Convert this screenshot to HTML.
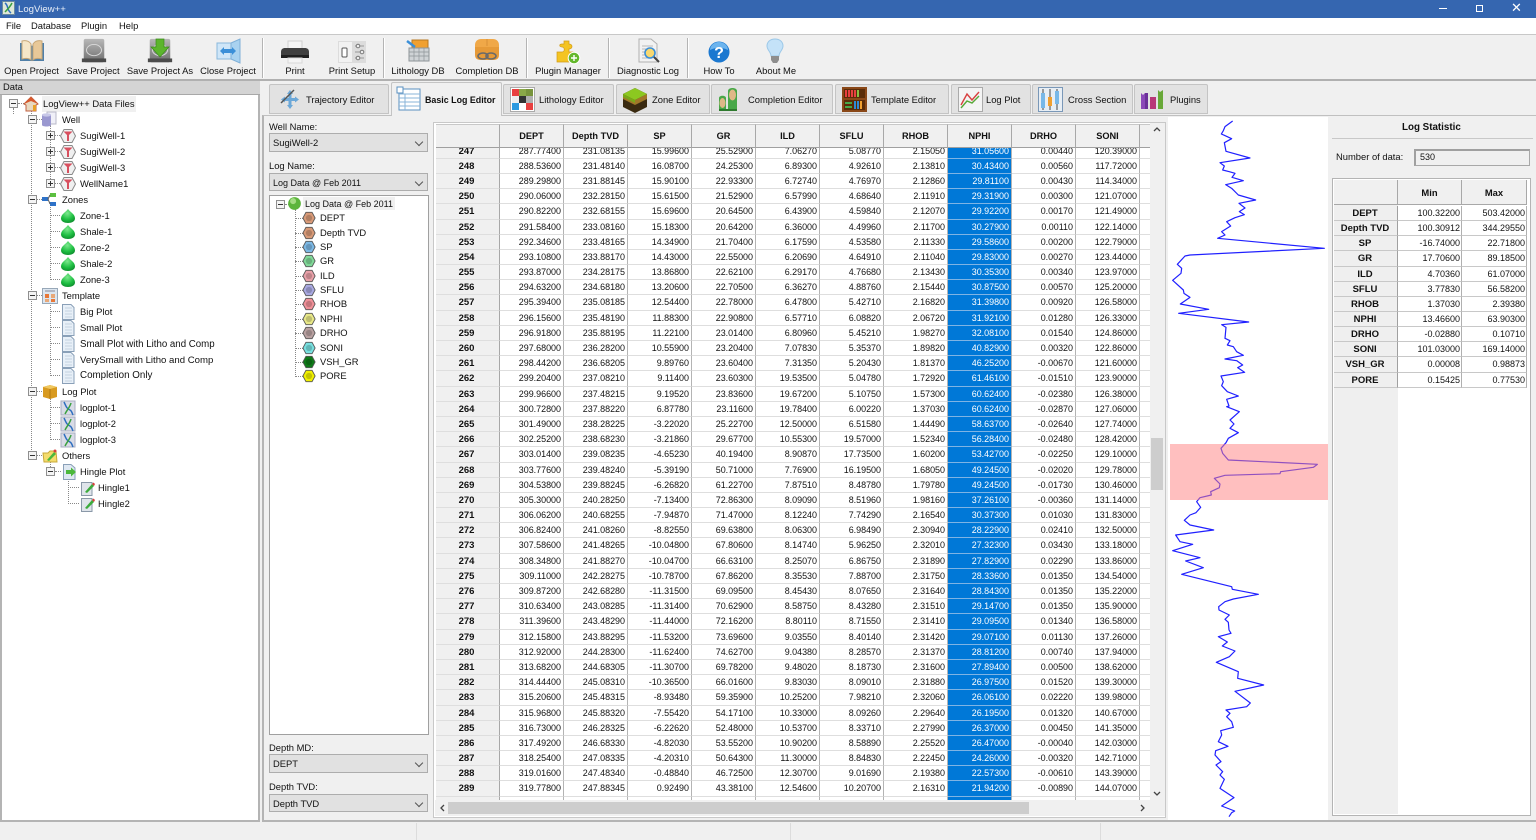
<!DOCTYPE html>
<html><head><meta charset="utf-8"><title>LogView++</title>
<style>
*{box-sizing:border-box}
html,body{margin:0;padding:0;width:1536px;height:840px;overflow:hidden;background:#f0f0f0;font:9.4px/12px "Liberation Sans",sans-serif;color:#111}
.a{position:absolute}
.t{position:absolute;white-space:nowrap;line-height:12px}
.tl{position:absolute;white-space:nowrap;line-height:12px;transform:translateX(-50%);top:65px}
.sep{position:absolute;top:38px;height:40px;width:1px;background:#b4b4b4;box-shadow:1px 0 0 #fff}
.tab{position:absolute;top:84px;height:30px;background:#e2e2e2;border:1px solid #c4c4c4;border-bottom:1px solid #c4c4c4;border-radius:2px 2px 0 0}
.tab span{position:absolute;top:9px;white-space:nowrap}
.tab svg{position:absolute;top:2px}
.cb{position:absolute;left:269px;width:159px;background:#e1e1e1;border:1px solid #adadad;padding-left:3px;line-height:18px}
.cb:after{content:"";position:absolute;right:5px;top:5px;width:5px;height:5px;border-right:1px solid #555;border-bottom:1px solid #555;transform:rotate(45deg)}
.ex{position:absolute;width:9px;height:9px;border:1px solid #8f8f8f;background:#f4f4f4}
.ex:before{content:"";position:absolute;left:1px;top:3px;width:5px;height:1px;background:#333}
.ex.p:after{content:"";position:absolute;left:3px;top:1px;width:1px;height:5px;background:#333}
.v{position:absolute;border-left:1px dotted #888;width:0}
.h{position:absolute;border-top:1px dotted #888;height:0}
.ic{position:absolute;width:16px;height:16px}
.hd{position:absolute;top:124px;height:24px;background:#f0f0f0;border-right:1px solid #a8a8a8;border-bottom:1px solid #a0a0a0;border-top:1px solid #c8c8c8;font-weight:bold;text-align:center;line-height:22px;font-size:9.2px}
.g{position:absolute;left:0;top:-4.4px;display:grid;grid-template-columns:64px repeat(10,64px) 10px;grid-auto-rows:15.19px;width:714px;font-size:8.95px;line-height:15px}
.g b,.g i,.g em,.g u{display:block;font-style:normal;text-decoration:none;border-bottom:1px solid #dedede;border-right:1px solid #b4b4b4;text-align:right;padding-right:2px;overflow:hidden}
.g b{background:#f0f0f0;text-align:center;font-size:9.5px;line-height:15.500px;border-right-color:#a8a8a8}
.g em{background:#0078d7;color:#fff;border-bottom-color:#7fb4e4;border-right-color:#b4b4b4}
.g u{border-right:0}
.s{position:absolute;left:1334px;top:206px;width:193px;display:grid;grid-template-columns:64px 64px 65px;grid-auto-rows:15.15px;font-size:9px;line-height:15px}
.s b,.s i{display:block;font-style:normal;border-bottom:1px solid #c8c8c8;border-right:1px solid #b0b0b0;text-align:right;padding-right:1px}
.s b{background:#efefef;text-align:center;font-size:9.5px;line-height:15px;border-right-color:#a0a0a0}
</style></head><body>
<svg width="0" height="0" style="position:absolute"><defs>
<radialGradient id="gz" cx=".45" cy=".3" r=".75"><stop offset="0" stop-color="#7ee88e"/><stop offset=".6" stop-color="#1fc043"/><stop offset="1" stop-color="#0e8a2c"/></radialGradient>
<linearGradient id="gd" x1="0" y1="0" x2="0" y2="1"><stop offset="0" stop-color="#b8b8b8"/><stop offset="1" stop-color="#6d6d6d"/></linearGradient>
<symbol id="drop" viewBox="0 0 16 16"><path d="M8 1C10 4 15 6 15 10.500C15 13.500 11.500 15 8 15C4.500 15 1 13.500 1 10.500C1 6 6 4 8 1Z" fill="url(#gz)"/></symbol>
<symbol id="well" viewBox="0 0 16 16"><path d="M4 1.5H12L15.5 8L12 14.5H4L.5 8Z" fill="#f0f0f0" stroke="#8a8a8a"/><path d="M3.5 3.5H12.5L9 7V13H7V7Z" fill="#d8505f"/></symbol>
<symbol id="doc" viewBox="0 0 16 16"><path d="M2.5 .5H11L14 3.5V15.5H2.5Z" fill="#e8f0f8" stroke="#8aa0b8"/><path d="M5 4H12M5 7H12M5 10H12M5 13H12" stroke="#c4d2e0"/></symbol>
<symbol id="lp" viewBox="0 0 16 16"><rect x="1" y="1" width="14" height="14" fill="#d9dbe6" stroke="#a8acc0"/><path d="M4 2C6 6 6 8 10 10C12 11 12 13 13 15" fill="none" stroke="#2e6fc0" stroke-width="1.5"/><path d="M11 3C10 7 7 10 5 14" fill="none" stroke="#3aa040" stroke-width="1.5"/></symbol>
<symbol id="pen" viewBox="0 0 16 16"><path d="M1.5 2.5H12V15.5H1.5Z" fill="#dfe4ea" stroke="#8a98a8"/><path d="M5 12L12 4L14 6L7 13Z" fill="#3cab3c"/><path d="M12 4L13.5 2.5L15 4L14 6Z" fill="#d8403c"/></symbol>
<symbol id="hx" viewBox="0 0 16 16"><path d="M4.5 1.5H11.5L15 8L11.5 14.5H4.5L1 8Z" fill="currentColor" stroke="#555"/><circle cx="8" cy="8" r="3.6" fill="#000" opacity=".18"/></symbol>
<symbol id="ball" viewBox="0 0 16 16"><circle cx="8" cy="8" r="6.8" fill="#5cb53c"/><circle cx="6.5" cy="5.5" r="3.2" fill="#a4dc84"/></symbol>
<symbol id="hdd" viewBox="0 0 30 30"><rect x="4" y="2" width="22" height="25" rx="2" fill="url(#gd)"/><rect x="2" y="23" width="26" height="4" fill="#4b4b4b"/><ellipse cx="15" cy="14" rx="8" ry="6" fill="none" stroke="#dadada"/></symbol>
</defs></svg>

<!-- title bar -->
<div class="a" style="left:0;top:0;width:1536px;height:18px;background:#3566b0"></div>
<svg class="a" style="left:2px;top:1px" width="13" height="14" viewBox="0 0 13 14"><rect x=".5" y=".5" width="12" height="13" fill="#dfe8d8" stroke="#6a8aa0"/><path d="M3 2C7 5 4 8 9 12" stroke="#2f6fc0" stroke-width="1.5" fill="none"/><path d="M10 2C8 6 6 8 3 11" stroke="#3aa040" stroke-width="1.5" fill="none"/></svg>
<div class="t" style="left:18px;top:4px;color:#e8eef8;font-size:9.6px">LogView++</div>
<div class="a" style="left:1439px;top:8px;width:8px;height:1px;background:#fff"></div>
<div class="a" style="left:1476px;top:5px;width:7px;height:7px;border:1px solid #fff"></div>
<div class="t" style="left:1511px;top:2px;color:#fff;font-size:13px">✕</div>

<!-- menu -->
<div class="a" style="left:0;top:18px;width:1536px;height:17px;background:#fff;border-bottom:1px solid #c8c8c8"></div>
<div class="t" style="left:6px;top:20px">File</div>
<div class="t" style="left:31px;top:20px">Database</div>
<div class="t" style="left:81px;top:20px">Plugin</div>
<div class="t" style="left:119px;top:20px">Help</div>

<!-- toolbar -->
<div class="a" style="left:0;top:79px;width:1536px;height:2px;background:#b0b0b0"></div>
<svg class="a" style="left:18px;top:38px" width="28" height="26" viewBox="0 0 28 26"><path d="M2 5H12L14 8L16 5H26V23H2Z" fill="#4f7fa8"/><path d="M4 3C8 2 11 3 13 6V22C11 20 8 20 4 21Z" fill="#f5e6c8" stroke="#c8a878"/><path d="M24 3C20 2 17 3 15 6V22C17 20 20 20 24 21Z" fill="#e8c898" stroke="#c8a878"/></svg>
<svg class="a" style="left:79px;top:37px" width="30" height="28"><use href="#hdd"/></svg>
<svg class="a" style="left:145px;top:37px" width="30" height="28"><use href="#hdd"/><path d="M11 2H19V10H24L15 20L6 10H11Z" fill="#5cb52c" stroke="#3a8a1c" stroke-width=".7"/></svg>
<svg class="a" style="left:215px;top:37px" width="27" height="27" viewBox="0 0 27 27"><path d="M2 6H18V22H2Z" fill="#cfe6f8" stroke="#8ab8dc"/><path d="M16 6L25 2V26L16 22Z" fill="#a9d2f0" stroke="#7fb0d8"/><path d="M5 14L9 10V12H17V10L21 14L17 18V16H9V18Z" fill="#3b8fd8"/></svg>
<svg class="a" style="left:280px;top:40px" width="30" height="24" viewBox="0 0 30 24"><rect x="8" y="1" width="14" height="9" fill="#f4f4f4" stroke="#d0d0d0"/><path d="M1 12C1 9 3 8 5 8H25C27 8 29 9 29 12V18H1Z" fill="#3f3f3f"/><rect x="1" y="15" width="28" height="3" fill="#1f1f1f"/><rect x="8" y="18" width="14" height="5" fill="#f4f4f4" stroke="#d8d8d8"/></svg>
<svg class="a" style="left:338px;top:41px" width="28" height="22" viewBox="0 0 28 22"><rect x="0" y="0" width="28" height="22" fill="#dcdcdc"/><rect x="1" y="1" width="13" height="20" fill="#f2f2f2"/><rect x="4" y="7" width="5" height="9" rx="1" fill="#fff" stroke="#555"/><path d="M17 5H26M17 11H26M17 17H26" stroke="#999"/><circle cx="20" cy="5" r="1.8" fill="#eee" stroke="#777"/><circle cx="24" cy="11" r="1.8" fill="#eee" stroke="#777"/><circle cx="20" cy="17" r="1.8" fill="#eee" stroke="#777"/></svg>
<svg class="a" style="left:405px;top:38px" width="27" height="27" viewBox="0 0 27 27"><rect x="7" y="2" width="16" height="8" fill="#f0a030" stroke="#b87820"/><rect x="4" y="10" width="20" height="13" fill="#cfd3d6" stroke="#8e9498"/><path d="M4 14H24M9 10V23M14 10V23M19 10V23M4 18H24" stroke="#8e9498" stroke-width=".7"/><path d="M2 3L10 9" stroke="#3b8fd8" stroke-width="2.5"/></svg>
<svg class="a" style="left:474px;top:38px" width="26" height="26" viewBox="0 0 26 26"><path d="M1 7C1 3 4 1 7 1H19C22 1 25 3 25 7V14H1Z" fill="#f0a848"/><path d="M1 9H25V17C25 21 22 22 19 22H7C4 22 1 21 1 17Z" fill="#e69a38"/><path d="M13 1V8" stroke="#d89038"/><ellipse cx="9" cy="18" rx="5" ry="3" fill="none" stroke="#6a6a6a" stroke-width="1.6"/><ellipse cx="17" cy="18" rx="5" ry="3" fill="none" stroke="#6a6a6a" stroke-width="1.6"/></svg>
<svg class="a" style="left:554px;top:38px" width="27" height="27" viewBox="0 0 27 27"><path d="M10 3H15V6C19 6 19 11 15 11V14H19V24H3V14H8C11 14 11 9 8 9C5 9 5 6 8 6H10Z" fill="#f4c422" stroke="#d09a18" stroke-width=".7"/><circle cx="20" cy="20" r="5.8" fill="#64b82c" stroke="#fff"/><path d="M20 17V23M17 20H23" stroke="#fff" stroke-width="1.4"/></svg>
<svg class="a" style="left:636px;top:38px" width="26" height="27" viewBox="0 0 26 27"><path d="M3 1H15L21 6V24H3Z" fill="#f2f2f2" stroke="#b0b0b0"/><path d="M6 8H17M6 11H17M6 14H9M6 17H9M6 20H12" stroke="#b8b8b8"/><circle cx="14" cy="15" r="5" fill="#f8d870" stroke="#3b8fd8" stroke-width="1.6"/><path d="M18 19L23 24" stroke="#444" stroke-width="2"/></svg>
<svg class="a" style="left:708px;top:41px" width="22" height="22" viewBox="0 0 22 22"><circle cx="11" cy="11" r="10.5" fill="#1b78d0"/><path d="M2 9A9 8 0 0 1 20 9C14 6 8 6 2 9Z" fill="#6cb4ee"/><text x="11" y="17" text-anchor="middle" font-family="Liberation Sans" font-weight="bold" font-size="16" fill="#fff">?</text></svg>
<svg class="a" style="left:766px;top:38px" width="18" height="26" viewBox="0 0 18 26"><path d="M9 1C4 1 1 4 1 8C1 12 5 14 5 18H13C13 14 17 12 17 8C17 4 14 1 9 1Z" fill="#c4e2f8" stroke="#9cc8e8"/><path d="M5 18H13V22L11 25H7L5 22Z" fill="#8e8e8e"/></svg>
<div class="tl" style="left:31.500px">Open Project</div>
<div class="tl" style="left:93px">Save Project</div>
<div class="tl" style="left:160px">Save Project As</div>
<div class="tl" style="left:228px">Close Project</div>
<div class="tl" style="left:295px">Print</div>
<div class="tl" style="left:352px">Print Setup</div>
<div class="tl" style="left:418px">Lithology DB</div>
<div class="tl" style="left:487px">Completion DB</div>
<div class="tl" style="left:568px">Plugin Manager</div>
<div class="tl" style="left:648px">Diagnostic Log</div>
<div class="tl" style="left:719px">How To</div>
<div class="tl" style="left:776px">About Me</div>
<div class="sep" style="left:262px"></div><div class="sep" style="left:383px"></div><div class="sep" style="left:526px"></div><div class="sep" style="left:608px"></div><div class="sep" style="left:687px"></div>

<!-- left panel -->
<div class="a" style="left:0;top:81px;width:260px;height:741px;border:2px solid #b4b4b4;border-top:0;background:#fff"></div>
<div class="a" style="left:0;top:81px;width:260px;height:14px;background:#d4d4d4;border-bottom:1px solid #a8a8a8"></div>
<div class="t" style="left:3px;top:81px">Data</div>
<div class="a" style="left:42px;top:96px;width:94px;height:16px;background:#f0f0f0"></div>

<div class="v" style="left:31px;top:110px;height:346px"></div>
<div class="v" style="left:13px;top:108px;height:6px"></div>
<div class="v" style="left:50px;top:125px;height:60px"></div>
<div class="v" style="left:50px;top:205px;height:75px"></div>
<div class="v" style="left:50px;top:301px;height:75px"></div>
<div class="v" style="left:50px;top:397px;height:43px"></div>
<div class="v" style="left:50px;top:461px;height:10px"></div>
<div class="v" style="left:68px;top:477px;height:27px"></div>
<div class="h" style="left:18px;top:103px;width:8px"></div>
<div class="h" style="left:36px;top:119px;width:8px"></div><div class="h" style="left:36px;top:199px;width:8px"></div><div class="h" style="left:36px;top:295px;width:8px"></div><div class="h" style="left:36px;top:391px;width:8px"></div><div class="h" style="left:36px;top:455px;width:8px"></div>
<div class="h" style="left:54px;top:135px;width:6px"></div><div class="h" style="left:54px;top:151px;width:6px"></div><div class="h" style="left:54px;top:167px;width:6px"></div><div class="h" style="left:54px;top:183px;width:6px"></div>
<div class="h" style="left:50px;top:215px;width:10px"></div><div class="h" style="left:50px;top:231px;width:10px"></div><div class="h" style="left:50px;top:247px;width:10px"></div><div class="h" style="left:50px;top:263px;width:10px"></div><div class="h" style="left:50px;top:279px;width:10px"></div>
<div class="h" style="left:50px;top:311px;width:10px"></div><div class="h" style="left:50px;top:327px;width:10px"></div><div class="h" style="left:50px;top:343px;width:10px"></div><div class="h" style="left:50px;top:359px;width:10px"></div><div class="h" style="left:50px;top:375px;width:10px"></div>
<div class="h" style="left:50px;top:407px;width:10px"></div><div class="h" style="left:50px;top:423px;width:10px"></div><div class="h" style="left:50px;top:439px;width:10px"></div>
<div class="h" style="left:55px;top:471px;width:6px"></div><div class="h" style="left:68px;top:487px;width:11px"></div><div class="h" style="left:68px;top:503px;width:11px"></div>

<div class="ex" style="left:9px;top:99px"></div><div class="ex" style="left:28px;top:115px"></div><div class="ex" style="left:28px;top:195px"></div><div class="ex" style="left:28px;top:291px"></div><div class="ex" style="left:28px;top:387px"></div><div class="ex" style="left:28px;top:451px"></div>
<div class="ex p" style="left:46px;top:131px"></div><div class="ex p" style="left:46px;top:147px"></div><div class="ex p" style="left:46px;top:163px"></div><div class="ex p" style="left:46px;top:179px"></div><div class="ex" style="left:46px;top:467px"></div>

<svg class="ic" style="left:23px;top:96px" viewBox="0 0 16 16"><path d="M1 8L8 1L15 8L13 9V15H3V9Z" fill="#e8d8c0" stroke="#c06040"/><path d="M1 8L8 1L15 8L8 5Z" fill="#d8582c"/><rect x="10" y="9" width="3" height="6" fill="#e8a028"/></svg>
<svg class="ic" style="left:41px;top:111px" viewBox="0 0 16 16"><rect x="6" y="1" width="9" height="12" fill="#f0f0f8" stroke="#b8b8c8"/><path d="M1 4C1 2 10 2 10 4V14C10 16 1 16 1 14Z" fill="#9a98d0"/><ellipse cx="5.5" cy="4" rx="4.5" ry="1.6" fill="#c8c8e8"/></svg>
<svg class="ic" style="left:60px;top:128px"><use href="#well"/></svg><svg class="ic" style="left:60px;top:144px"><use href="#well"/></svg><svg class="ic" style="left:60px;top:160px"><use href="#well"/></svg><svg class="ic" style="left:60px;top:176px"><use href="#well"/></svg>
<svg class="ic" style="left:41px;top:192px" viewBox="0 0 16 16"><rect x="1" y="5" width="6" height="4" fill="#2e72c8"/><rect x="9" y="1" width="6" height="4" fill="#5cc040"/><rect x="9" y="10" width="6" height="4" fill="#2e72c8"/><path d="M7 7L9 3M7 7L9 12" stroke="#555"/></svg>
<svg class="ic" style="left:60px;top:208px"><use href="#drop"/></svg><svg class="ic" style="left:60px;top:224px"><use href="#drop"/></svg><svg class="ic" style="left:60px;top:240px"><use href="#drop"/></svg><svg class="ic" style="left:60px;top:256px"><use href="#drop"/></svg><svg class="ic" style="left:60px;top:272px"><use href="#drop"/></svg>
<svg class="ic" style="left:42px;top:288px" viewBox="0 0 16 16"><rect x=".5" y=".5" width="15" height="15" fill="#dce6f0" stroke="#98a8b8"/><rect x="3" y="6" width="4" height="4" fill="#e87838"/><rect x="9" y="6" width="4" height="4" fill="#e8a878"/><rect x="3" y="11" width="4" height="3" fill="#e8a878"/><rect x="9" y="11" width="4" height="3" fill="#e87838"/><path d="M3 3H13" stroke="#889"/></svg>
<svg class="ic" style="left:60px;top:304px"><use href="#doc"/></svg><svg class="ic" style="left:60px;top:320px"><use href="#doc"/></svg><svg class="ic" style="left:60px;top:336px"><use href="#doc"/></svg><svg class="ic" style="left:60px;top:352px"><use href="#doc"/></svg><svg class="ic" style="left:60px;top:368px"><use href="#doc"/></svg>
<svg class="ic" style="left:42px;top:384px" viewBox="0 0 16 16"><path d="M8 1L15 3V13L8 15L1 13V3Z" fill="#d89a20"/><path d="M1 3L8 5L15 3L8 1Z" fill="#f0c860"/><path d="M8 5V15" stroke="#b07810"/></svg>
<svg class="ic" style="left:60px;top:400px"><use href="#lp"/></svg><svg class="ic" style="left:60px;top:416px"><use href="#lp"/></svg><svg class="ic" style="left:60px;top:432px"><use href="#lp"/></svg>
<svg class="ic" style="left:42px;top:448px" viewBox="0 0 16 16"><path d="M1 5H6L8 3H14L15 14H2Z" fill="#f4dc6c" stroke="#c8a838"/><path d="M5 12L12 4L14 6L7 13Z" fill="#4cb83c"/><circle cx="13" cy="3" r="1.5" fill="#d8403c"/></svg>
<svg class="ic" style="left:61px;top:464px" viewBox="0 0 16 16"><path d="M2.5 .5H10L14 4V15.5H2.5Z" fill="#dfe8f2" stroke="#8aa0b8"/><path d="M5 6H10V3.5L15 8L10 12.5V10H5Z" fill="#4cb83c"/></svg>
<svg class="ic" style="left:80px;top:480px"><use href="#pen"/></svg><svg class="ic" style="left:80px;top:496px"><use href="#pen"/></svg>

<div class="t" style="left:43px;top:98px">LogView++ Data Files</div>
<div class="t" style="left:62px;top:114px">Well</div>
<div class="t" style="left:80px;top:130px">SugiWell-1</div>
<div class="t" style="left:80px;top:146px">SugiWell-2</div>
<div class="t" style="left:80px;top:162px">SugiWell-3</div>
<div class="t" style="left:80px;top:178px">WellName1</div>
<div class="t" style="left:62px;top:194px">Zones</div>
<div class="t" style="left:80px;top:210px">Zone-1</div>
<div class="t" style="left:80px;top:226px">Shale-1</div>
<div class="t" style="left:80px;top:242px">Zone-2</div>
<div class="t" style="left:80px;top:258px">Shale-2</div>
<div class="t" style="left:80px;top:274px">Zone-3</div>
<div class="t" style="left:62px;top:290px">Template</div>
<div class="t" style="left:80px;top:306px">Big Plot</div>
<div class="t" style="left:80px;top:322px">Small Plot</div>
<div class="t" style="left:80px;top:338.500px;font-size:9.7px">Small Plot with Litho and Comp</div>
<div class="t" style="left:80px;top:354.500px;font-size:9.6px">VerySmall with Litho and Comp</div>
<div class="t" style="left:80px;top:370px;font-size:9.8px">Completion Only</div>
<div class="t" style="left:62px;top:386px">Log Plot</div>
<div class="t" style="left:80px;top:402px">logplot-1</div>
<div class="t" style="left:80px;top:418px">logplot-2</div>
<div class="t" style="left:80px;top:434px">logplot-3</div>
<div class="t" style="left:62px;top:450px">Others</div>
<div class="t" style="left:80px;top:466px">Hingle Plot</div>
<div class="t" style="left:98px;top:482px">Hingle1</div>
<div class="t" style="left:98px;top:498px">Hingle2</div>

<!-- right main frame -->
<div class="a" style="left:262px;top:115px;width:1274px;height:707px;border:2px solid #b4b4b4;border-right:0;border-top:1px solid #c0c0c0;background:#f0f0f0"></div>

<!-- tabs -->
<div class="tab" style="left:269px;width:120px"><svg style="left:8px" width="24" height="24" viewBox="0 0 24 24"><path d="M12 3L15 7H13.5V11H17V9.5L21 12.500L17 15.500V14H13.500V18H15L12 22L9 18H10.500V14H7V15.500L3 12.500L7 9.500V11H10.500V7H9Z" fill="#6ca8d8"/><path d="M3 16L16 3" stroke="#555" stroke-width="1.500"/></svg><span style="left:36px">Trajectory Editor</span></div>
<div class="tab" style="left:391px;width:111px;top:82px;height:34px;background:#f0f0f0;z-index:2;border-bottom:0"><svg style="left:4px;top:3px" width="26" height="26" viewBox="0 0 26 26"><rect x="3" y="3" width="21" height="21" fill="#fff" stroke="#5a90c0"/><path d="M3 8H24M3 12H24M3 16H24M3 20H24M9 8V24" stroke="#8ab4d8"/><rect x="1" y="1" width="6" height="6" fill="#fff" stroke="#5a90c0"/></svg><span style="left:33px;top:11px;font-weight:bold;font-size:8.9px">Basic Log Editor</span></div>
<div class="tab" style="left:503px;width:111px"><svg style="left:6px" width="25" height="25" viewBox="0 0 25 25"><rect x=".5" y=".5" width="24" height="24" fill="#fff" stroke="#aaa"/><rect x="2" y="2" width="7" height="7" fill="#e84040"/><rect x="9" y="2" width="7" height="7" fill="#8aa848"/><rect x="16" y="2" width="7" height="7" fill="#78943c"/><rect x="9" y="9" width="7" height="7" fill="#333"/><rect x="16" y="9" width="7" height="7" fill="#b0b0b0"/><rect x="2" y="16" width="7" height="7" fill="#2e9ae0"/><rect x="16" y="16" width="7" height="7" fill="#e84040"/><rect x="2" y="9" width="7" height="7" fill="#eee"/></svg><span style="left:35px">Lithology Editor</span></div>
<div class="tab" style="left:616px;width:94px"><svg style="left:5px" width="26" height="26" viewBox="0 0 26 26"><path d="M13 1L25 7V20L13 26L1 20V7Z" fill="#3a2a10"/><path d="M1 7L13 13L25 7V12L13 18L1 12Z" fill="#a07828"/><path d="M13 1L25 7L13 13L1 7Z" fill="#8cc820"/><path d="M1 7L13 13V16L1 10Z" fill="#78a818"/></svg><span style="left:35px">Zone Editor</span></div>
<div class="tab" style="left:711px;width:122px"><svg style="left:6px" width="26" height="26" viewBox="0 0 26 26"><path d="M1 11C1 8 8 8 8 11V24H1Z" fill="#48a848"/><path d="M10 4C10 0 19 0 19 4V24H10Z" fill="#48a848"/><ellipse cx="4.500" cy="16" rx="3" ry="5" fill="#e0b888"/><ellipse cx="14.500" cy="8" rx="3.500" ry="5.500" fill="#e0b888"/><rect x="1" y="22" width="18" height="2" fill="#2e7a2e"/></svg><span style="left:36px">Completion Editor</span></div>
<div class="tab" style="left:835px;width:114px"><svg style="left:6px" width="25" height="25" viewBox="0 0 25 25"><rect width="25" height="25" fill="#8a4818"/><rect x="2" y="2" width="21" height="9" fill="#5a2c08"/><path d="M4 3V10M7 3V10M10 3V10M13 3V10" stroke="#e84040" stroke-width="2"/><path d="M16 3V10" stroke="#88c040" stroke-width="2"/><rect x="2" y="13" width="21" height="10" fill="#5a2c08"/><path d="M13 14V22M16 14V22" stroke="#2e8ad8" stroke-width="2"/><path d="M19 14V22" stroke="#f0a030" stroke-width="2"/><path d="M3 16H10M3 20H10" stroke="#48a848" stroke-width="2"/></svg><span style="left:35px">Template Editor</span></div>
<div class="tab" style="left:951px;width:80px"><svg style="left:6px" width="25" height="25" viewBox="0 0 25 25"><rect x=".5" y=".5" width="24" height="24" fill="#f4f4f4" stroke="#aaa"/><path d="M3 18L9 7L14 13L21 5" fill="none" stroke="#d84040" stroke-width="1.400"/><path d="M3 21L9 14L14 16L21 9" fill="none" stroke="#58a838" stroke-width="1.400"/></svg><span style="left:34px">Log Plot</span></div>
<div class="tab" style="left:1032px;width:101px"><svg style="left:5px" width="25" height="25" viewBox="0 0 25 25"><rect x=".5" y=".5" width="24" height="24" fill="#e8eef4" stroke="#7a98b8"/><path d="M5 2V23M12 2V23M19 2V23" stroke="#444"/><rect x="3" y="6" width="4" height="15" fill="#78b8e8"/><rect x="10" y="10" width="4" height="9" fill="#f0a030"/><rect x="17" y="4" width="4" height="13" fill="#78b8e8"/></svg><span style="left:35px">Cross Section</span></div>
<div class="tab" style="left:1134px;width:74px"><svg style="left:5px" width="26" height="25" viewBox="0 0 26 25"><path d="M1 6L3 8L5 6V22H1Z" fill="#8a48b8"/><path d="M5 6H8V22H5Z" fill="#6a3098"/><path d="M10 10H16V22H10Z" fill="#b83878"/><path d="M18 3L20 5L23 3V22H18Z" fill="#68a838"/></svg><span style="left:35px">Plugins</span></div>

<!-- editor left -->
<div class="t" style="left:269px;top:121px">Well Name:</div>
<div class="cb" style="top:133px;height:19px">SugiWell-2</div>
<div class="t" style="left:269px;top:160px">Log Name:</div>
<div class="cb" style="top:173px;height:18px;font-size:9px">Log Data @ Feb 2011</div>
<div class="a" style="left:269px;top:195px;width:160px;height:540px;background:#fff;border:1px solid #a0a0a0"></div>
<div class="a" style="left:303px;top:197px;width:92px;height:13px;background:#f0f0f0"></div>
<div class="v" style="left:295px;top:209px;height:168px"></div>
<div class="ex" style="left:276px;top:200px"></div>
<div class="h" style="left:285px;top:204px;width:4px"></div>
<svg class="ic" style="left:287px;top:196px;width:15px;height:15px"><use href="#ball"/></svg>
<div class="h" style="left:295px;top:218px;width:8px"></div><div class="h" style="left:295px;top:233px;width:8px"></div><div class="h" style="left:295px;top:247px;width:8px"></div><div class="h" style="left:295px;top:261px;width:8px"></div><div class="h" style="left:295px;top:276px;width:8px"></div><div class="h" style="left:295px;top:290px;width:8px"></div><div class="h" style="left:295px;top:304px;width:8px"></div><div class="h" style="left:295px;top:319px;width:8px"></div><div class="h" style="left:295px;top:333px;width:8px"></div><div class="h" style="left:295px;top:348px;width:8px"></div><div class="h" style="left:295px;top:362px;width:8px"></div><div class="h" style="left:295px;top:376px;width:8px"></div>
<svg class="ic" style="left:302px;top:211px;width:14px;height:14px;color:#d89a78"><use href="#hx"/></svg>
<svg class="ic" style="left:302px;top:226px;width:14px;height:14px;color:#d89a78"><use href="#hx"/></svg>
<svg class="ic" style="left:302px;top:240px;width:14px;height:14px;color:#7cb8e4"><use href="#hx"/></svg>
<svg class="ic" style="left:302px;top:254px;width:14px;height:14px;color:#80d898"><use href="#hx"/></svg>
<svg class="ic" style="left:302px;top:269px;width:14px;height:14px;color:#e8a0a8"><use href="#hx"/></svg>
<svg class="ic" style="left:302px;top:283px;width:14px;height:14px;color:#a8a8e0"><use href="#hx"/></svg>
<svg class="ic" style="left:302px;top:297px;width:14px;height:14px;color:#f09098"><use href="#hx"/></svg>
<svg class="ic" style="left:302px;top:312px;width:14px;height:14px;color:#e8e888"><use href="#hx"/></svg>
<svg class="ic" style="left:302px;top:326px;width:14px;height:14px;color:#b8a0a0"><use href="#hx"/></svg>
<svg class="ic" style="left:302px;top:341px;width:14px;height:14px;color:#78e0e0"><use href="#hx"/></svg>
<svg class="ic" style="left:302px;top:355px;width:14px;height:14px;color:#0e7a18"><use href="#hx"/></svg>
<svg class="ic" style="left:302px;top:369px;width:14px;height:14px;color:#f0f000"><use href="#hx"/></svg>
<div class="t" style="left:305px;top:198px;font-size:9px">Log Data @ Feb 2011</div>
<div class="t" style="left:320px;top:212px">DEPT</div>
<div class="t" style="left:320px;top:227px">Depth TVD</div>
<div class="t" style="left:320px;top:241px">SP</div>
<div class="t" style="left:320px;top:255px">GR</div>
<div class="t" style="left:320px;top:270px">ILD</div>
<div class="t" style="left:320px;top:284px">SFLU</div>
<div class="t" style="left:320px;top:298px">RHOB</div>
<div class="t" style="left:320px;top:313px">NPHI</div>
<div class="t" style="left:320px;top:327px">DRHO</div>
<div class="t" style="left:320px;top:342px">SONI</div>
<div class="t" style="left:320px;top:356px">VSH_GR</div>
<div class="t" style="left:320px;top:370px">PORE</div>
<div class="t" style="left:269px;top:742px">Depth MD:</div>
<div class="cb" style="top:754px;height:19px">DEPT</div>
<div class="t" style="left:269px;top:781px">Depth TVD:</div>
<div class="cb" style="top:794px;height:18px">Depth TVD</div>

<!-- data table -->
<div class="a" style="left:433px;top:122px;width:733px;height:696px;background:#fff;border:1px solid #c8c8c8"></div>
<div class="hd" style="left:436px;width:64px"></div>
<div class="hd" style="left:500px;width:64px">DEPT</div>
<div class="hd" style="left:564px;width:64px">Depth TVD</div>
<div class="hd" style="left:628px;width:64px">SP</div>
<div class="hd" style="left:692px;width:64px">GR</div>
<div class="hd" style="left:756px;width:64px">ILD</div>
<div class="hd" style="left:820px;width:64px">SFLU</div>
<div class="hd" style="left:884px;width:64px">RHOB</div>
<div class="hd" style="left:948px;width:64px">NPHI</div>
<div class="hd" style="left:1012px;width:64px">DRHO</div>
<div class="hd" style="left:1076px;width:64px">SONI</div>
<div class="hd" style="left:1140px;width:10px;border-right:0"></div>
<div class="a" style="left:436px;top:148px;width:714px;height:652px;overflow:hidden">
<div class="g">
<b>247</b><i>287.77400</i><i>231.08135</i><i>15.99600</i><i>25.52900</i><i>7.06270</i><i>5.08770</i><i>2.15050</i><em>31.05600</em><i>0.00440</i><i>120.39000</i><u></u>
<b>248</b><i>288.53600</i><i>231.48140</i><i>16.08700</i><i>24.25300</i><i>6.89300</i><i>4.92610</i><i>2.13810</i><em>30.43400</em><i>0.00560</i><i>117.72000</i><u></u>
<b>249</b><i>289.29800</i><i>231.88145</i><i>15.90100</i><i>22.93300</i><i>6.72740</i><i>4.76970</i><i>2.12860</i><em>29.81100</em><i>0.00430</i><i>114.34000</i><u></u>
<b>250</b><i>290.06000</i><i>232.28150</i><i>15.61500</i><i>21.52900</i><i>6.57990</i><i>4.68640</i><i>2.11910</i><em>29.31900</em><i>0.00300</i><i>121.07000</i><u></u>
<b>251</b><i>290.82200</i><i>232.68155</i><i>15.69600</i><i>20.64500</i><i>6.43900</i><i>4.59840</i><i>2.12070</i><em>29.92200</em><i>0.00170</i><i>121.49000</i><u></u>
<b>252</b><i>291.58400</i><i>233.08160</i><i>15.18300</i><i>20.64200</i><i>6.36000</i><i>4.49960</i><i>2.11700</i><em>30.27900</em><i>0.00110</i><i>122.14000</i><u></u>
<b>253</b><i>292.34600</i><i>233.48165</i><i>14.34900</i><i>21.70400</i><i>6.17590</i><i>4.53580</i><i>2.11330</i><em>29.58600</em><i>0.00200</i><i>122.79000</i><u></u>
<b>254</b><i>293.10800</i><i>233.88170</i><i>14.43000</i><i>22.55000</i><i>6.20690</i><i>4.64910</i><i>2.11040</i><em>29.83000</em><i>0.00270</i><i>123.44000</i><u></u>
<b>255</b><i>293.87000</i><i>234.28175</i><i>13.86800</i><i>22.62100</i><i>6.29170</i><i>4.76680</i><i>2.13430</i><em>30.35300</em><i>0.00340</i><i>123.97000</i><u></u>
<b>256</b><i>294.63200</i><i>234.68180</i><i>13.20600</i><i>22.70500</i><i>6.36270</i><i>4.88760</i><i>2.15440</i><em>30.87500</em><i>0.00570</i><i>125.20000</i><u></u>
<b>257</b><i>295.39400</i><i>235.08185</i><i>12.54400</i><i>22.78000</i><i>6.47800</i><i>5.42710</i><i>2.16820</i><em>31.39800</em><i>0.00920</i><i>126.58000</i><u></u>
<b>258</b><i>296.15600</i><i>235.48190</i><i>11.88300</i><i>22.90800</i><i>6.57710</i><i>6.08820</i><i>2.06720</i><em>31.92100</em><i>0.01280</i><i>126.33000</i><u></u>
<b>259</b><i>296.91800</i><i>235.88195</i><i>11.22100</i><i>23.01400</i><i>6.80960</i><i>5.45210</i><i>1.98270</i><em>32.08100</em><i>0.01540</i><i>124.86000</i><u></u>
<b>260</b><i>297.68000</i><i>236.28200</i><i>10.55900</i><i>23.20400</i><i>7.07830</i><i>5.35370</i><i>1.89820</i><em>40.82900</em><i>0.00320</i><i>122.86000</i><u></u>
<b>261</b><i>298.44200</i><i>236.68205</i><i>9.89760</i><i>23.60400</i><i>7.31350</i><i>5.20430</i><i>1.81370</i><em>46.25200</em><i>-0.00670</i><i>121.60000</i><u></u>
<b>262</b><i>299.20400</i><i>237.08210</i><i>9.11400</i><i>23.60300</i><i>19.53500</i><i>5.04780</i><i>1.72920</i><em>61.46100</em><i>-0.01510</i><i>123.90000</i><u></u>
<b>263</b><i>299.96600</i><i>237.48215</i><i>9.19520</i><i>23.83600</i><i>19.67200</i><i>5.10750</i><i>1.57300</i><em>60.62400</em><i>-0.02380</i><i>126.38000</i><u></u>
<b>264</b><i>300.72800</i><i>237.88220</i><i>6.87780</i><i>23.11600</i><i>19.78400</i><i>6.00220</i><i>1.37030</i><em>60.62400</em><i>-0.02870</i><i>127.06000</i><u></u>
<b>265</b><i>301.49000</i><i>238.28225</i><i>-3.22020</i><i>25.22700</i><i>12.50000</i><i>6.51580</i><i>1.44490</i><em>58.63700</em><i>-0.02640</i><i>127.74000</i><u></u>
<b>266</b><i>302.25200</i><i>238.68230</i><i>-3.21860</i><i>29.67700</i><i>10.55300</i><i>19.57000</i><i>1.52340</i><em>56.28400</em><i>-0.02480</i><i>128.42000</i><u></u>
<b>267</b><i>303.01400</i><i>239.08235</i><i>-4.65230</i><i>40.19400</i><i>8.90870</i><i>17.73500</i><i>1.60200</i><em>53.42700</em><i>-0.02250</i><i>129.10000</i><u></u>
<b>268</b><i>303.77600</i><i>239.48240</i><i>-5.39190</i><i>50.71000</i><i>7.76900</i><i>16.19500</i><i>1.68050</i><em>49.24500</em><i>-0.02020</i><i>129.78000</i><u></u>
<b>269</b><i>304.53800</i><i>239.88245</i><i>-6.26820</i><i>61.22700</i><i>7.87510</i><i>8.48780</i><i>1.79780</i><em>49.24500</em><i>-0.01730</i><i>130.46000</i><u></u>
<b>270</b><i>305.30000</i><i>240.28250</i><i>-7.13400</i><i>72.86300</i><i>8.09090</i><i>8.51960</i><i>1.98160</i><em>37.26100</em><i>-0.00360</i><i>131.14000</i><u></u>
<b>271</b><i>306.06200</i><i>240.68255</i><i>-7.94870</i><i>71.47000</i><i>8.12240</i><i>7.74290</i><i>2.16540</i><em>30.37300</em><i>0.01030</i><i>131.83000</i><u></u>
<b>272</b><i>306.82400</i><i>241.08260</i><i>-8.82550</i><i>69.63800</i><i>8.06300</i><i>6.98490</i><i>2.30940</i><em>28.22900</em><i>0.02410</i><i>132.50000</i><u></u>
<b>273</b><i>307.58600</i><i>241.48265</i><i>-10.04800</i><i>67.80600</i><i>8.14740</i><i>5.96250</i><i>2.32010</i><em>27.32300</em><i>0.03430</i><i>133.18000</i><u></u>
<b>274</b><i>308.34800</i><i>241.88270</i><i>-10.04700</i><i>66.63100</i><i>8.25070</i><i>6.86750</i><i>2.31890</i><em>27.82900</em><i>0.02290</i><i>133.86000</i><u></u>
<b>275</b><i>309.11000</i><i>242.28275</i><i>-10.78700</i><i>67.86200</i><i>8.35530</i><i>7.88700</i><i>2.31750</i><em>28.33600</em><i>0.01350</i><i>134.54000</i><u></u>
<b>276</b><i>309.87200</i><i>242.68280</i><i>-11.31500</i><i>69.09500</i><i>8.45430</i><i>8.07650</i><i>2.31640</i><em>28.84300</em><i>0.01350</i><i>135.22000</i><u></u>
<b>277</b><i>310.63400</i><i>243.08285</i><i>-11.31400</i><i>70.62900</i><i>8.58750</i><i>8.43280</i><i>2.31510</i><em>29.14700</em><i>0.01350</i><i>135.90000</i><u></u>
<b>278</b><i>311.39600</i><i>243.48290</i><i>-11.44000</i><i>72.16200</i><i>8.80110</i><i>8.71550</i><i>2.31410</i><em>29.09500</em><i>0.01340</i><i>136.58000</i><u></u>
<b>279</b><i>312.15800</i><i>243.88295</i><i>-11.53200</i><i>73.69600</i><i>9.03550</i><i>8.40140</i><i>2.31420</i><em>29.07100</em><i>0.01130</i><i>137.26000</i><u></u>
<b>280</b><i>312.92000</i><i>244.28300</i><i>-11.62400</i><i>74.62700</i><i>9.04380</i><i>8.28570</i><i>2.31370</i><em>28.81200</em><i>0.00740</i><i>137.94000</i><u></u>
<b>281</b><i>313.68200</i><i>244.68305</i><i>-11.30700</i><i>69.78200</i><i>9.48020</i><i>8.18730</i><i>2.31600</i><em>27.89400</em><i>0.00500</i><i>138.62000</i><u></u>
<b>282</b><i>314.44400</i><i>245.08310</i><i>-10.36500</i><i>66.01600</i><i>9.83030</i><i>8.09010</i><i>2.31880</i><em>26.97500</em><i>0.01520</i><i>139.30000</i><u></u>
<b>283</b><i>315.20600</i><i>245.48315</i><i>-8.93480</i><i>59.35900</i><i>10.25200</i><i>7.98210</i><i>2.32060</i><em>26.06100</em><i>0.02220</i><i>139.98000</i><u></u>
<b>284</b><i>315.96800</i><i>245.88320</i><i>-7.55420</i><i>54.17100</i><i>10.33000</i><i>8.09260</i><i>2.29640</i><em>26.19500</em><i>0.01320</i><i>140.67000</i><u></u>
<b>285</b><i>316.73000</i><i>246.28325</i><i>-6.22620</i><i>52.48000</i><i>10.53700</i><i>8.33710</i><i>2.27990</i><em>26.37000</em><i>0.00450</i><i>141.35000</i><u></u>
<b>286</b><i>317.49200</i><i>246.68330</i><i>-4.82030</i><i>53.55200</i><i>10.90200</i><i>8.58890</i><i>2.25520</i><em>26.47000</em><i>-0.00040</i><i>142.03000</i><u></u>
<b>287</b><i>318.25400</i><i>247.08335</i><i>-4.20310</i><i>50.64300</i><i>11.30000</i><i>8.84830</i><i>2.22450</i><em>24.26000</em><i>-0.00320</i><i>142.71000</i><u></u>
<b>288</b><i>319.01600</i><i>247.48340</i><i>-0.48840</i><i>46.72500</i><i>12.30700</i><i>9.01690</i><i>2.19380</i><em>22.57300</em><i>-0.00610</i><i>143.39000</i><u></u>
<b>289</b><i>319.77800</i><i>247.88345</i><i>0.92490</i><i>43.38100</i><i>12.54600</i><i>10.20700</i><i>2.16310</i><em>21.94200</em><i>-0.00890</i><i>144.07000</i><u></u>
<b></b><i></i><i></i><i></i><i></i><i></i><i></i><i></i><em></em><i></i><i></i><u></u>
</div></div>
<!-- scrollbars -->
<div class="a" style="left:1150px;top:123px;width:15px;height:677px;background:#f0f0f0"></div>
<div class="a" style="left:1151px;top:438px;width:12px;height:52px;background:#cdcdcd"></div>
<svg class="a" style="left:1153px;top:126px" width="8" height="6"><path d="M1 5L4 2L7 5" fill="none" stroke="#444" stroke-width="1.300"/></svg>
<svg class="a" style="left:1153px;top:791px" width="8" height="6"><path d="M1 1L4 4L7 1" fill="none" stroke="#444" stroke-width="1.300"/></svg>
<div class="a" style="left:435px;top:800px;width:730px;height:16px;background:#f0f0f0"></div>
<div class="a" style="left:448px;top:802px;width:581px;height:12px;background:#cdcdcd"></div>
<svg class="a" style="left:439px;top:804px" width="6" height="8"><path d="M5 1L2 4L5 7" fill="none" stroke="#444" stroke-width="1.300"/></svg>
<svg class="a" style="left:1140px;top:804px" width="6" height="8"><path d="M1 1L4 4L1 7" fill="none" stroke="#444" stroke-width="1.300"/></svg>

<!-- plot -->
<div class="a" style="left:1168px;top:117px;width:160px;height:703px;background:#fff"></div>
<svg class="a" style="left:1170px;top:120px" width="160" height="700" viewBox="0 0 480 2100"><polyline fill="none" stroke="#2020ff" stroke-width="3.600" stroke-linejoin="round" points="188,3 165,20 160,32 154,42 163,46 185,56 163,68 168,94 240,114 150,128 163,138 158,150 178,155 195,160 186,172 220,182 167,194 185,205 205,225 257,240 207,250 225,264 208,275 223,284 195,293 170,305 182,318 155,335 165,345 143,355 463,385 60,405 45,408 22,433 35,445 33,460 8,481 40,510 42,520 60,532 31,552 116,568 26,580 236,606 155,614 168,622 165,655 180,662 172,675 190,680 200,695 220,706 165,717 200,722 218,735 203,743 224,757 153,768 160,785 155,797 172,815 205,828 170,838 177,858 170,860 208,875 180,900 192,912 180,925 205,938 175,955 168,968 153,985 158,1000 175,1020 442,1033 430,1042 332,1055 330,1061 165,1066 133,1075 150,1092 148,1103 122,1115 124,1125 90,1133 80,1145 92,1162 78,1178 60,1185 43,1201 60,1215 131,1230 17,1245 30,1265 68,1273 8,1292 90,1313 47,1323 100,1343 35,1363 185,1400 187,1408 265,1423 190,1437 165,1445 146,1460 147,1470 178,1485 165,1498 175,1507 177,1530 183,1540 145,1550 172,1566 157,1578 195,1593 178,1610 139,1627 205,1655 203,1675 281,1695 195,1714 241,1749 230,1760 168,1770 180,1780 170,1790 185,1805 190,1822 152,1832 155,1845 145,1865 174,1879 137,1892 135,1905 153,1925 138,1935 158,1955 150,1965 163,1978 150,2005 192,2033 155,2058 194,2073 185,2078 177,2090"/></svg>
<div class="a" style="left:1170px;top:444px;width:158px;height:56px;background:rgba(255,128,128,.5)"></div>

<!-- stats -->
<div class="t" style="left:1402px;top:122px;font-weight:bold;font-size:9.800px">Log Statistic</div>
<div class="a" style="left:1332px;top:138px;width:201px;height:1px;background:#c8c8c8"></div>
<div class="t" style="left:1336px;top:151px">Number of data:</div>
<div class="a" style="left:1414px;top:149px;width:116px;height:17px;background:#f0f0f0;border:1px solid #a8a8a8;border-left:2px solid #a0a0a0;border-top:2px solid #a0a0a0;padding-left:4px;line-height:13px;font-size:9px">530</div>
<div class="a" style="left:1332px;top:178px;width:199px;height:638px;background:#fff;border:1px solid #b4b4b4"></div>
<div class="a" style="left:1334px;top:180px;width:64px;height:634px;background:#efefef"></div>
<div class="a" style="left:1334px;top:180px;width:64px;height:25px;background:#f0f0f0;border-right:1px solid #a8a8a8;border-bottom:1px solid #a8a8a8"></div>
<div class="a" style="left:1398px;top:180px;width:64px;height:25px;background:#f0f0f0;border-right:1px solid #a8a8a8;border-bottom:1px solid #a8a8a8;font-weight:bold;text-align:center;line-height:25px">Min</div>
<div class="a" style="left:1462px;top:180px;width:65px;height:25px;background:#f0f0f0;border-right:1px solid #a8a8a8;border-bottom:1px solid #a8a8a8;font-weight:bold;text-align:center;line-height:25px">Max</div>
<div class="s">
<b>DEPT</b><i>100.32200</i><i>503.42000</i>
<b>Depth TVD</b><i>100.30912</i><i>344.29550</i>
<b>SP</b><i>-16.74000</i><i>22.71800</i>
<b>GR</b><i>17.70600</i><i>89.18500</i>
<b>ILD</b><i>4.70360</i><i>61.07000</i>
<b>SFLU</b><i>3.77830</i><i>56.58200</i>
<b>RHOB</b><i>1.37030</i><i>2.39380</i>
<b>NPHI</b><i>13.46600</i><i>63.90300</i>
<b>DRHO</b><i>-0.02880</i><i>0.10710</i>
<b>SONI</b><i>101.03000</i><i>169.14000</i>
<b>VSH_GR</b><i>0.00008</i><i>0.98873</i>
<b>PORE</b><i>0.15425</i><i>0.77530</i>
</div>

<!-- status bar -->
<div class="a" style="left:416px;top:823px;width:1px;height:17px;background:#dcdcdc"></div>
<div class="a" style="left:790px;top:823px;width:1px;height:17px;background:#dcdcdc"></div>
<div class="a" style="left:1100px;top:823px;width:1px;height:17px;background:#dcdcdc"></div>
</body></html>
